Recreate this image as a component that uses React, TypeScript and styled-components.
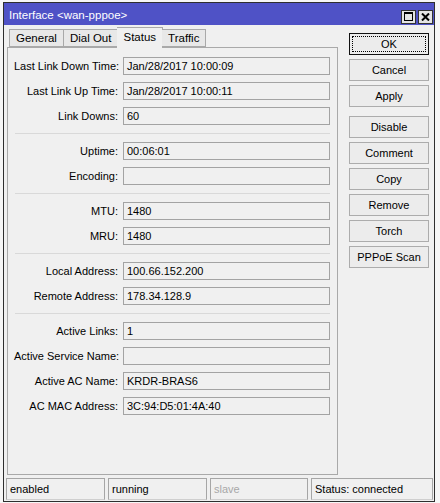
import React from 'react'
import styled, { createGlobalStyle } from 'styled-components'

const GlobalStyle = createGlobalStyle`
  html, body {
    margin: 0;
    padding: 0;
    background: #f6f6f6;
    overflow: hidden;
  }
  body {
    font-family: "Liberation Sans", Arial, sans-serif;
    font-size: 11px;
    color: #000;
  }
  * {
    box-sizing: border-box;
  }
`

const Window = styled.div`
  margin: 2px 0 0 3px;
  width: 432px;
  height: 500px;
  border: 1px solid #2e2e2e;
  background: #f0f0f0;
  display: flex;
  flex-direction: column;
`

const TitleBar = styled.div`
  height: 22px;
  background: #4f52c6;
  color: #fff;
  font-size: 11.5px;
  display: flex;
  align-items: center;
  padding: 0 1px 0 5px;
`

const Title = styled.span`
  flex: 1;
  padding-top: 1px;
`

const TitleButton = styled.button`
  width: 15px;
  height: 14px;
  margin: 5px 0 0 2px;
  padding: 0;
  border: 1px solid #333;
  background: #e4e4e4;
  display: flex;
  align-items: center;
  justify-content: center;
`

const Main = styled.div`
  flex: 1;
  display: flex;
  padding: 2px 5px 3px 3px;
  gap: 11px;
  min-height: 0;
`

const LeftColumn = styled.div`
  width: 331px;
  display: flex;
  flex-direction: column;
`

const TabStrip = styled.div`
  height: 20px;
  display: flex;
  align-items: flex-end;
  padding-left: 2px;
  position: relative;
  z-index: 1;
`

const Tab = styled.div<{ $active?: boolean }>`
  height: ${({ $active }) => ($active ? '21px' : '18px')};
  margin-bottom: ${({ $active }) => ($active ? '-1px' : '0')};
  padding: 0 6px;
  font-size: 11.5px;
  display: flex;
  align-items: center;
  padding-bottom: ${({ $active }) => ($active ? '3px' : '0')};
  background: ${({ $active }) => ($active ? '#f0f0f0' : '#e8e8e8')};
  border: 1px solid #a9a9a9;
  border-bottom: ${({ $active }) => ($active ? 'none' : '1px solid #a9a9a9')};
  margin-left: ${({ $active }) => ($active ? '-1px' : '0')};
  margin-right: ${({ $active }) => ($active ? '-1px' : '0')};
  & + & {
    border-left: none;
  }
`

const Panel = styled.div`
  flex: 1;
  border: 1px solid #a9a9a9;
  padding: 9px 7px 0 6px;
  display: flex;
  flex-direction: column;
`

const Group = styled.div`
  display: flex;
  flex-direction: column;
  gap: 7px;
`

const Separator = styled.div`
  height: 1px;
  background: #d9d9d9;
  margin: 8px 0 8px 1px;
`

const Row = styled.div`
  display: grid;
  grid-template-columns: 104px 207px;
  column-gap: 5px;
  align-items: center;
`

const Label = styled.span`
  text-align: right;
  font-size: 11px;
  white-space: nowrap;
`

const Field = styled.div`
  height: 18px;
  border: 1px solid #a3a3a3;
  background: #f0f0f0;
  padding: 0 3px;
  font-size: 11px;
  line-height: 16px;
  white-space: nowrap;
  overflow: hidden;
`

const ButtonColumn = styled.div`
  width: 80px;
  padding-top: 6px;
  display: flex;
  flex-direction: column;
`

const ButtonGroup = styled.div`
  display: flex;
  flex-direction: column;
  gap: 4px;
  & + & {
    margin-top: 9px;
  }
`

const ActionButton = styled.button<{ $default?: boolean }>`
  position: relative;
  height: 22px;
  padding: 0;
  font-family: inherit;
  font-size: 11px;
  color: #000;
  background: #ececec;
  border: 1px solid ${({ $default }) => ($default ? '#111' : '#acacac')};
  &::after {
    content: '';
    display: ${({ $default }) => ($default ? 'block' : 'none')};
    position: absolute;
    inset: 2px;
    border: 1px dotted #000;
  }
`

const StatusBar = styled.div`
  height: 22px;
  display: flex;
  gap: 3px;
  padding: 0 1px 0 2px;
  margin-bottom: 1px;
`

const StatusCell = styled.div<{ $width: number; $muted?: boolean }>`
  width: ${({ $width }) => $width}px;
  border: 1px solid #a6a6a6;
  border-bottom-color: #cfcfcf;
  padding: 0 3px;
  font-size: 11px;
  display: flex;
  align-items: center;
  color: ${({ $muted }) => ($muted ? '#a8a8a8' : '#000')};
`

type Item = { label: string; value: string }

const groups: Item[][] = [
  [
    { label: 'Last Link Down Time:', value: 'Jan/28/2017 10:00:09' },
    { label: 'Last Link Up Time:', value: 'Jan/28/2017 10:00:11' },
    { label: 'Link Downs:', value: '60' },
  ],
  [
    { label: 'Uptime:', value: '00:06:01' },
    { label: 'Encoding:', value: '' },
  ],
  [
    { label: 'MTU:', value: '1480' },
    { label: 'MRU:', value: '1480' },
  ],
  [
    { label: 'Local Address:', value: '100.66.152.200' },
    { label: 'Remote Address:', value: '178.34.128.9' },
  ],
  [
    { label: 'Active Links:', value: '1' },
    { label: 'Active Service Name:', value: '' },
    { label: 'Active AC Name:', value: 'KRDR-BRAS6' },
    { label: 'AC MAC Address:', value: '3C:94:D5:01:4A:40' },
  ],
]

const buttonGroups = [
  ['OK', 'Cancel', 'Apply'],
  ['Disable', 'Comment', 'Copy', 'Remove', 'Torch', 'PPPoE Scan'],
]

const tabs = ['General', 'Dial Out', 'Status', 'Traffic']

const MaximizeIcon = () => (
  <svg width="9" height="9" viewBox="0 0 9 9">
    <rect x="0.5" y="0.5" width="8" height="8" fill="none" stroke="#000" />
    <rect x="0" y="0" width="9" height="2" fill="#000" />
  </svg>
)

const CloseIcon = () => (
  <svg width="9" height="8" viewBox="0 0 9 8">
    <path d="M1 0.5 L8 7.5 M8 0.5 L1 7.5" stroke="#000" strokeWidth="2" />
  </svg>
)

export default function App() {
  return (
    <>
      <GlobalStyle />
      <Window>
        <TitleBar>
          <Title>Interface &lt;wan-pppoe&gt;</Title>
          <TitleButton>
            <MaximizeIcon />
          </TitleButton>
          <TitleButton>
            <CloseIcon />
          </TitleButton>
        </TitleBar>
        <Main>
          <LeftColumn>
            <TabStrip>
              {tabs.map((t) => (
                <Tab key={t} $active={t === 'Status'}>
                  {t}
                </Tab>
              ))}
            </TabStrip>
            <Panel>
              {groups.map((g, i) => (
                <React.Fragment key={i}>
                  {i > 0 && <Separator />}
                  <Group>
                    {g.map((f) => (
                      <Row key={f.label}>
                        <Label>{f.label}</Label>
                        <Field>{f.value}</Field>
                      </Row>
                    ))}
                  </Group>
                </React.Fragment>
              ))}
            </Panel>
          </LeftColumn>
          <ButtonColumn>
            {buttonGroups.map((g, i) => (
              <ButtonGroup key={i}>
                {g.map((b) => (
                  <ActionButton key={b} $default={b === 'OK'}>
                    {b}
                  </ActionButton>
                ))}
              </ButtonGroup>
            ))}
          </ButtonColumn>
        </Main>
        <StatusBar>
          <StatusCell $width={99}>enabled</StatusCell>
          <StatusCell $width={99}>running</StatusCell>
          <StatusCell $width={98} $muted>
            slave
          </StatusCell>
          <StatusCell $width={122}>Status: connected</StatusCell>
        </StatusBar>
      </Window>
    </>
  )
}
